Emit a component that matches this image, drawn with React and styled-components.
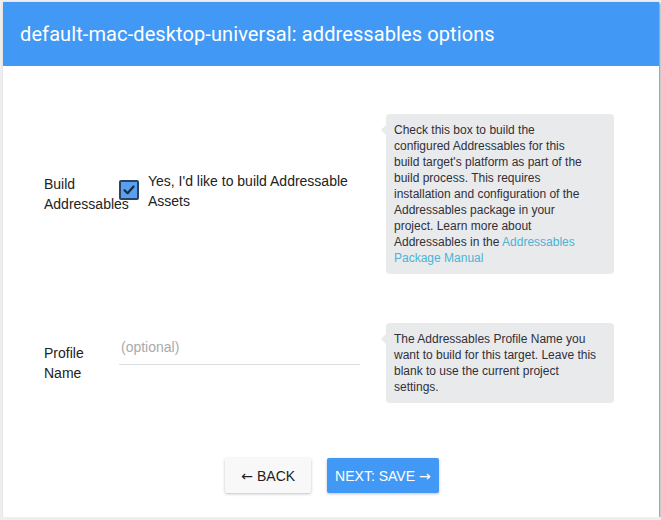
import React, { useState } from "react";
import styled, { createGlobalStyle } from "styled-components";

const GlobalStyle = createGlobalStyle`
  html, body {
    margin: 0;
    padding: 0;
    background: #eeeeee;
  }
  body {
    font-family: "Liberation Sans", Arial, sans-serif;
  }
`;

const fields = [
  {
    id: "build",
    label: "Build Addressables",
    padRight: 23,
    help: (
      <>
        Check this box to build the configured Addressables for this build
        target's platform as part of the build process. This requires
        installation and configuration of the Addressables package in your
        project. Learn more about Addressables in the{" "}
        <HelpLink href="#">Addressables Package Manual</HelpLink>
      </>
    ),
  },
  {
    id: "profile",
    label: "Profile Name",
    padRight: 8,
    help: "The Addressables Profile Name you want to build for this target. Leave this blank to use the current project settings.",
  },
];

function HelpLink(props) {
  return <LinkText {...props} />;
}

const App = () => {
  const [build, setBuild] = useState(true);
  const [profile, setProfile] = useState("");

  return (
    <Page>
      <GlobalStyle />
      <Card>
        <Header>default-mac-desktop-universal: addressables options</Header>
        <Form>
          {fields.map((f) => (
            <Row key={f.id}>
              <Label>{f.label}</Label>
              <Control>
                {f.id === "build" ? (
                  <CheckRow onClick={() => setBuild(!build)}>
                    <CheckBox $checked={build}>
                      {build && (
                        <svg width="14" height="14" viewBox="0 0 14 14">
                          <path
                            d="M2.5 7.2 L5.6 10.2 L11.6 3.6"
                            fill="none"
                            stroke="#1d2a3a"
                            strokeWidth="2.2"
                            strokeLinecap="round"
                            strokeLinejoin="round"
                          />
                        </svg>
                      )}
                    </CheckBox>
                    <CheckText>Yes, I'd like to build Addressable Assets</CheckText>
                  </CheckRow>
                ) : (
                  <TextInput
                    placeholder="(optional)"
                    value={profile}
                    onChange={(e) => setProfile(e.target.value)}
                  />
                )}
              </Control>
              <Tooltip $padRight={f.padRight}>{f.help}</Tooltip>
            </Row>
          ))}
        </Form>
        <Actions>
          <Button>
            <Arrow>←</Arrow> BACK
          </Button>
          <Button $primary>
            NEXT: SAVE <Arrow>→</Arrow>
          </Button>
        </Actions>
      </Card>
    </Page>
  );
};

export default App;

const Page = styled.div`
  padding: 2px 2px 0 3px;
`;

const Card = styled.div`
  height: 515px;
  background: #fff;
  box-shadow: 1px 1px 2px rgba(0, 0, 0, 0.45);
  display: flex;
  flex-direction: column;
`;

const Header = styled.div`
  height: 64px;
  flex: none;
  background: #4299f5;
  color: #fff;
  font-family: Roboto, "Liberation Sans", sans-serif;
  font-size: 20px;
  letter-spacing: 0.1px;
  display: flex;
  align-items: center;
  padding-left: 17px;
`;

const Form = styled.div`
  display: flex;
  flex-direction: column;
  gap: 49px;
  padding: 48px 0 0 41px;
`;

const Row = styled.div`
  display: flex;
  align-items: center;
`;

const Label = styled.div`
  width: 75px;
  font-size: 14px;
  line-height: 20px;
  color: #222;
`;

const Control = styled.div`
  width: 241px;
  margin-right: 26px;
`;

const CheckRow = styled.div`
  display: flex;
  align-items: center;
  gap: 9px;
  cursor: pointer;
`;

const CheckBox = styled.div`
  flex: none;
  width: 20px;
  height: 20px;
  box-sizing: border-box;
  border: 2px solid #2b4261;
  border-radius: 2px;
  background: ${(p) => (p.$checked ? "#5aa0f0" : "#fff")};
  display: flex;
  align-items: center;
  justify-content: center;
  margin-top: -9px;
`;

const CheckText = styled.div`
  font-size: 14px;
  line-height: 20px;
  color: #222;
  margin-top: -6px;
`;

const TextInput = styled.input`
  width: 100%;
  box-sizing: border-box;
  border: none;
  border-bottom: 1px solid #dddddd;
  outline: none;
  font-family: "Liberation Sans", Arial, sans-serif;
  font-size: 14px;
  padding: 3px 2px 9px;
  margin-bottom: 26px;
  color: #222;
  &::placeholder {
    color: #aaaaaa;
  }
`;

const Tooltip = styled.div`
  position: relative;
  width: 228px;
  box-sizing: border-box;
  padding: 8px ${(p) => p.$padRight}px 8px 8px;
  background: #e9eaec;
  border-radius: 4px;
  font-family: "Liberation Sans", Arial, sans-serif;
  font-size: 12px;
  line-height: 16px;
  color: #30303a;
  &::before {
    content: "";
    position: absolute;
    left: -5px;
    top: 11px;
    border-style: solid;
    border-width: 5px 5px 5px 0;
    border-color: transparent #e9eaec transparent transparent;
  }
`;

const LinkText = styled.a`
  color: #4bb3d6;
  text-decoration: none;
`;

const Actions = styled.div`
  display: flex;
  justify-content: center;
  gap: 16px;
  margin-top: 55px;
  padding-left: 2px;
`;

const Button = styled.button`
  height: 35px;
  padding: 0 ${(p) => (p.$primary ? "8px" : "16px")};
  border: none;
  border-radius: 2px;
  font-family: "Liberation Sans", Arial, sans-serif;
  font-size: 14px;
  background: ${(p) => (p.$primary ? "#4299f5" : "#f8f8f8")};
  color: ${(p) => (p.$primary ? "#fff" : "#222")};
  box-shadow: 0 1px 3px rgba(0, 0, 0, 0.25);
  cursor: pointer;
`;

const Arrow = styled.span`
  font-family: "DejaVu Sans", sans-serif;
  font-size: 14px;
`;
